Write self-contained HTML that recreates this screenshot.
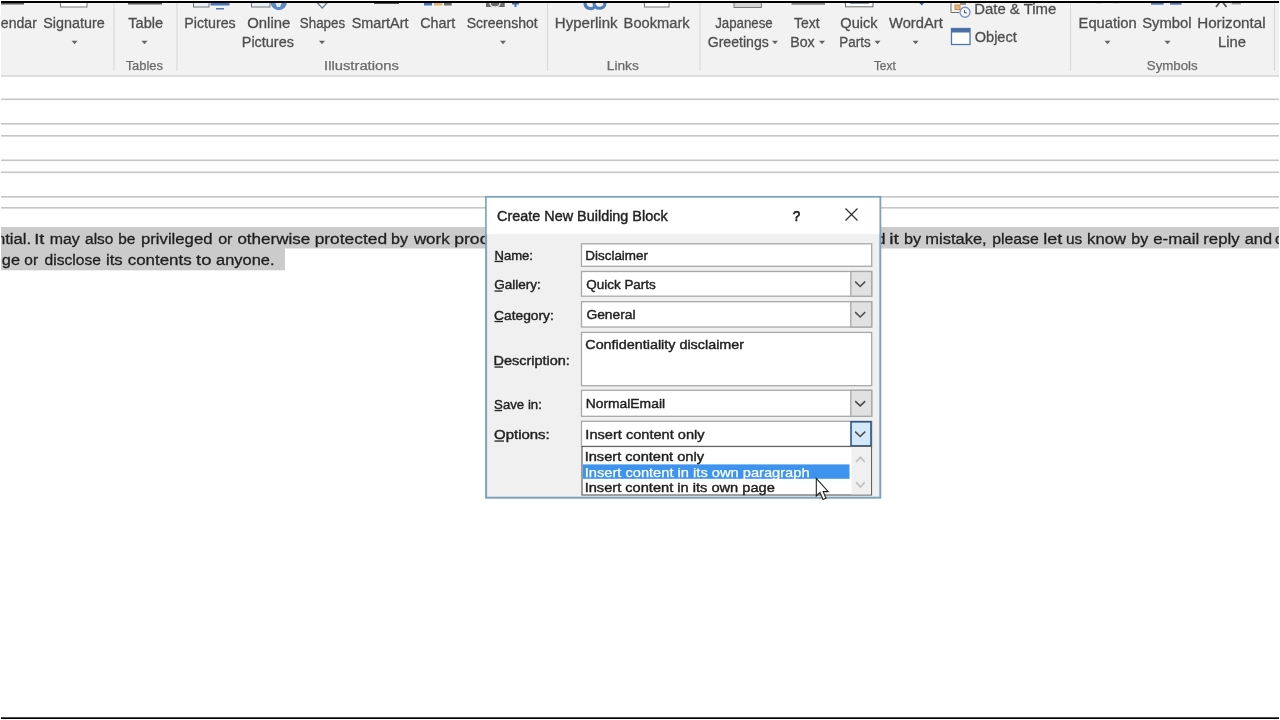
<!DOCTYPE html>
<html><head><meta charset="utf-8"><style>
html,body{margin:0;padding:0;width:1280px;height:720px;overflow:hidden;background:#fff;}
svg{display:block;filter:blur(0.4px);font-family:"Liberation Sans",sans-serif;}
</style></head><body>
<svg width="1280" height="720" viewBox="0 0 1280 720">
<rect x="1" y="3" width="1278" height="72" fill="#f2f2f2" />
<rect x="1" y="75" width="1278" height="2" fill="#dedede" />
<rect x="113.5" y="3" width="1" height="68" fill="#d6d6d6" />
<rect x="176.5" y="3" width="1" height="68" fill="#d6d6d6" />
<rect x="547" y="3" width="1" height="68" fill="#d6d6d6" />
<rect x="699.5" y="3" width="1" height="68" fill="#d6d6d6" />
<rect x="1070" y="3" width="1" height="68" fill="#d6d6d6" />
<rect x="1274" y="3" width="1" height="68" fill="#d6d6d6" />
<text x="0.84" y="27.8" font-size="14" fill="#4e4e4e" textLength="36.01" lengthAdjust="spacingAndGlyphs" stroke="#4e4e4e" stroke-width="0.28">endar</text>
<text x="43.25" y="27.8" font-size="14" fill="#4e4e4e" textLength="61.40" lengthAdjust="spacingAndGlyphs" stroke="#4e4e4e" stroke-width="0.28">Signature</text>
<text x="128.31" y="27.8" font-size="14" fill="#4e4e4e" textLength="34.76" lengthAdjust="spacingAndGlyphs" stroke="#4e4e4e" stroke-width="0.28">Table</text>
<text x="184.26" y="27.8" font-size="14" fill="#4e4e4e" textLength="51.47" lengthAdjust="spacingAndGlyphs" stroke="#4e4e4e" stroke-width="0.28">Pictures</text>
<text x="247.23" y="27.8" font-size="14" fill="#4e4e4e" textLength="43.05" lengthAdjust="spacingAndGlyphs" stroke="#4e4e4e" stroke-width="0.28">Online</text>
<text x="299.80" y="27.8" font-size="14" fill="#4e4e4e" textLength="45.29" lengthAdjust="spacingAndGlyphs" stroke="#4e4e4e" stroke-width="0.28">Shapes</text>
<text x="351.75" y="27.8" font-size="14" fill="#4e4e4e" textLength="56.74" lengthAdjust="spacingAndGlyphs" stroke="#4e4e4e" stroke-width="0.28">SmartArt</text>
<text x="420.28" y="27.8" font-size="14" fill="#4e4e4e" textLength="34.99" lengthAdjust="spacingAndGlyphs" stroke="#4e4e4e" stroke-width="0.28">Chart</text>
<text x="466.67" y="27.8" font-size="14" fill="#4e4e4e" textLength="71.05" lengthAdjust="spacingAndGlyphs" stroke="#4e4e4e" stroke-width="0.28">Screenshot</text>
<text x="554.80" y="27.8" font-size="14" fill="#4e4e4e" textLength="62.78" lengthAdjust="spacingAndGlyphs" stroke="#4e4e4e" stroke-width="0.28">Hyperlink</text>
<text x="623.63" y="27.8" font-size="14" fill="#4e4e4e" textLength="66.00" lengthAdjust="spacingAndGlyphs" stroke="#4e4e4e" stroke-width="0.28">Bookmark</text>
<text x="715.20" y="27.8" font-size="14" fill="#4e4e4e" textLength="57.52" lengthAdjust="spacingAndGlyphs" stroke="#4e4e4e" stroke-width="0.28">Japanese</text>
<text x="794.12" y="27.8" font-size="14" fill="#4e4e4e" textLength="25.60" lengthAdjust="spacingAndGlyphs" stroke="#4e4e4e" stroke-width="0.28">Text</text>
<text x="840.34" y="27.8" font-size="14" fill="#4e4e4e" textLength="37.27" lengthAdjust="spacingAndGlyphs" stroke="#4e4e4e" stroke-width="0.28">Quick</text>
<text x="889.08" y="27.8" font-size="14" fill="#4e4e4e" textLength="53.66" lengthAdjust="spacingAndGlyphs" stroke="#4e4e4e" stroke-width="0.28">WordArt</text>
<text x="1078.63" y="27.8" font-size="14" fill="#4e4e4e" textLength="57.97" lengthAdjust="spacingAndGlyphs" stroke="#4e4e4e" stroke-width="0.28">Equation</text>
<text x="1142.23" y="27.8" font-size="14" fill="#4e4e4e" textLength="49.40" lengthAdjust="spacingAndGlyphs" stroke="#4e4e4e" stroke-width="0.28">Symbol</text>
<text x="1197.18" y="27.8" font-size="14" fill="#4e4e4e" textLength="68.44" lengthAdjust="spacingAndGlyphs" stroke="#4e4e4e" stroke-width="0.28">Horizontal</text>
<text x="241.75" y="47.2" font-size="14" fill="#4e4e4e" textLength="52.14" lengthAdjust="spacingAndGlyphs" stroke="#4e4e4e" stroke-width="0.28">Pictures</text>
<text x="707.69" y="47.2" font-size="14" fill="#4e4e4e" textLength="61.16" lengthAdjust="spacingAndGlyphs" stroke="#4e4e4e" stroke-width="0.28">Greetings</text>
<text x="790.26" y="47.2" font-size="14" fill="#4e4e4e" textLength="24.45" lengthAdjust="spacingAndGlyphs" stroke="#4e4e4e" stroke-width="0.28">Box</text>
<text x="839.33" y="47.2" font-size="14" fill="#4e4e4e" textLength="31.33" lengthAdjust="spacingAndGlyphs" stroke="#4e4e4e" stroke-width="0.28">Parts</text>
<text x="1217.97" y="47.2" font-size="14" fill="#4e4e4e" textLength="27.91" lengthAdjust="spacingAndGlyphs" stroke="#4e4e4e" stroke-width="0.28">Line</text>
<path d="M71.6,40.65 L77.6,40.65 L74.6,44.15 Z" fill="#666" stroke="none" stroke-width="1" />
<path d="M141.5,40.65 L147.5,40.65 L144.5,44.15 Z" fill="#666" stroke="none" stroke-width="1" />
<path d="M319.0,40.65 L325.0,40.65 L322,44.15 Z" fill="#666" stroke="none" stroke-width="1" />
<path d="M500.0,40.65 L506.0,40.65 L503,44.15 Z" fill="#666" stroke="none" stroke-width="1" />
<path d="M912.6,40.65 L918.6,40.65 L915.6,44.15 Z" fill="#666" stroke="none" stroke-width="1" />
<path d="M1104.5,40.65 L1110.5,40.65 L1107.5,44.15 Z" fill="#666" stroke="none" stroke-width="1" />
<path d="M1164.5,40.65 L1170.5,40.65 L1167.5,44.15 Z" fill="#666" stroke="none" stroke-width="1" />
<path d="M772.0,40.65 L778.0,40.65 L775,44.15 Z" fill="#666" stroke="none" stroke-width="1" />
<path d="M819.0,40.65 L825.0,40.65 L822,44.15 Z" fill="#666" stroke="none" stroke-width="1" />
<path d="M874.5,40.65 L880.5,40.65 L877.5,44.15 Z" fill="#666" stroke="none" stroke-width="1" />
<text x="974.21" y="14.1" font-size="14" fill="#4e4e4e" textLength="82.10" lengthAdjust="spacingAndGlyphs" stroke="#4e4e4e" stroke-width="0.28">Date &amp; Time</text>
<text x="974.75" y="42.3" font-size="14.5" fill="#4e4e4e" textLength="42.00" lengthAdjust="spacingAndGlyphs" stroke="#4e4e4e" stroke-width="0.28">Object</text>
<text x="125.64" y="70.4" font-size="13" fill="#6a6a6a" textLength="37.42" lengthAdjust="spacingAndGlyphs" stroke="#6a6a6a" stroke-width="0.25">Tables</text>
<text x="324.07" y="70.4" font-size="13" fill="#6a6a6a" textLength="74.76" lengthAdjust="spacingAndGlyphs" stroke="#6a6a6a" stroke-width="0.25">Illustrations</text>
<text x="606.80" y="70.4" font-size="13" fill="#6a6a6a" textLength="32.02" lengthAdjust="spacingAndGlyphs" stroke="#6a6a6a" stroke-width="0.25">Links</text>
<text x="873.91" y="70.4" font-size="13" fill="#6a6a6a" textLength="21.79" lengthAdjust="spacingAndGlyphs" stroke="#6a6a6a" stroke-width="0.25">Text</text>
<text x="1146.80" y="70.4" font-size="13" fill="#6a6a6a" textLength="50.86" lengthAdjust="spacingAndGlyphs" stroke="#6a6a6a" stroke-width="0.25">Symbols</text>
<rect x="1" y="2.5" width="23" height="2" fill="#5a5a5a" />
<rect x="60.5" y="2" width="26.5" height="5" fill="#fff" stroke="#7a7a7a" stroke-width="1"/>
<rect x="128" y="2.5" width="34" height="2" fill="#5a5a5a" />
<rect x="193.5" y="2" width="15.5" height="5" fill="#e8eef6" stroke="#777" stroke-width="1"/>
<rect x="210.5" y="2" width="19" height="3.5" fill="#4a7ab8" />
<rect x="216" y="8" width="8" height="1.5" fill="#4a7ab8" />
<rect x="251.5" y="2" width="18.5" height="5" fill="#e8eef6" stroke="#777" stroke-width="1"/>
<path d="M270.5,2 A8.2,8.2 0 0 0 287,2 Z" fill="#5b8ac4" stroke="none" stroke-width="1" />
<path d="M275,2 L282,2 L280,7 L277,7 Z" fill="#dfeaf6" stroke="none" stroke-width="1" />
<path d="M317,2.5 L327.5,2.5 L322.2,8 Z" fill="#f4f6fa" stroke="#6d7d90" stroke-width="1.3" />
<rect x="374" y="2" width="25" height="1.8" fill="#333" />
<rect x="424" y="2.5" width="8" height="3" fill="#4275b5" />
<rect x="434" y="2.5" width="8.3" height="3" fill="#e4b46a" />
<rect x="444" y="2.5" width="7.7" height="3" fill="#6f6f6f" />
<rect x="486" y="2.5" width="18.7" height="4.5" fill="#6b6b6b" />
<path d="M490,3 A5,4 0 0 0 500,3" fill="none" stroke="#e6e6e6" stroke-width="1.5" />
<rect x="514.5" y="2" width="2" height="5" fill="#3d6fb0" />
<rect x="512" y="3" width="7" height="1.5" fill="#3d6fb0" />
<path d="M585,3 C585,10 595,10 595,5 M594,3 C594,10 605,10 605,3" fill="none" stroke="#4f7fba" stroke-width="3.2" />
<rect x="644.5" y="2" width="24.5" height="5" fill="#fff" stroke="#777" stroke-width="1"/>
<rect x="734" y="2" width="27.4" height="5.5" fill="#d4d4d4" stroke="#7a7a7a" stroke-width="1"/>
<rect x="791.4" y="3" width="33.6" height="1.8" fill="#8a8a8a" />
<rect x="845.5" y="2" width="27.5" height="4.8" fill="#fff" stroke="#6b6b6b" stroke-width="1"/>
<rect x="850" y="2" width="19" height="1.5" fill="#1f3d66" />
<path d="M918,2 L924.5,2 L922,5.5 Z" fill="#3a6ab0" stroke="none" stroke-width="1" />
<path d="M951,3 L951,12.5 L959,12.5" fill="none" stroke="#6f6f6f" stroke-width="1" />
<rect x="955" y="5" width="5" height="4.5" fill="#e8b27a" stroke="#d0894a" stroke-width="1"/>
<rect x="960" y="3" width="6" height="2" fill="#9a9a9a" />
<circle cx="965" cy="12.3" r="5" fill="#f4f7fb" stroke="#7b96bb" stroke-width="1.4"/>
<path d="M964.5,10 L964.5,12.8 L967,12.8" fill="none" stroke="#555" stroke-width="1" />
<rect x="951.5" y="28.5" width="18.5" height="16" fill="#fff" stroke="#5275a8" stroke-width="1.3"/>
<rect x="951.5" y="28.5" width="18.5" height="4" fill="#4a6fa6" />
<rect x="1095.6" y="1.5" width="6.5" height="1.6" fill="#444" />
<rect x="1113" y="1.5" width="6" height="1.6" fill="#444" />
<rect x="1151" y="2.3" width="12.6" height="2.4" fill="#4a7ab8" />
<rect x="1170" y="2.3" width="11.5" height="2.4" fill="#4a7ab8" />
<path d="M1216,7 L1219.5,2.5 M1226.5,7 L1223,2.5" fill="none" stroke="#555" stroke-width="1.8" />
<rect x="1231.6" y="3" width="9.4" height="1.5" fill="#a0a0a0" />
<rect x="1" y="1" width="1278" height="2" fill="#000" />
<rect x="1" y="98.5" width="1278" height="1.6" fill="#c6c6c6" />
<rect x="1" y="123.0" width="1278" height="1.6" fill="#c6c6c6" />
<rect x="1" y="135.0" width="1278" height="1.6" fill="#c6c6c6" />
<rect x="1" y="159.5" width="1278" height="1.6" fill="#c6c6c6" />
<rect x="1" y="171.5" width="1278" height="1.6" fill="#c6c6c6" />
<rect x="1" y="196.0" width="1278" height="1.6" fill="#c6c6c6" />
<rect x="1" y="207.0" width="1278" height="1.6" fill="#c6c6c6" />
<rect x="1" y="227" width="1278" height="21.5" fill="#cbcbcb" />
<rect x="1" y="248" width="284" height="22.3" fill="#cbcbcb" />
<text x="34.26" y="243.6" font-size="15.5" fill="#1f1f1f" textLength="10.15" lengthAdjust="spacingAndGlyphs" stroke="#1f1f1f" stroke-width="0.3">It</text>
<text x="49.66" y="243.6" font-size="15.5" fill="#1f1f1f" textLength="30.12" lengthAdjust="spacingAndGlyphs" stroke="#1f1f1f" stroke-width="0.3">may</text>
<text x="85.08" y="243.6" font-size="15.5" fill="#1f1f1f" textLength="28.33" lengthAdjust="spacingAndGlyphs" stroke="#1f1f1f" stroke-width="0.3">also</text>
<text x="118.20" y="243.6" font-size="15.5" fill="#1f1f1f" textLength="17.13" lengthAdjust="spacingAndGlyphs" stroke="#1f1f1f" stroke-width="0.3">be</text>
<text x="141.01" y="243.6" font-size="15.5" fill="#1f1f1f" textLength="71.48" lengthAdjust="spacingAndGlyphs" stroke="#1f1f1f" stroke-width="0.3">privileged</text>
<text x="218.15" y="243.6" font-size="15.5" fill="#1f1f1f" textLength="14.36" lengthAdjust="spacingAndGlyphs" stroke="#1f1f1f" stroke-width="0.3">or</text>
<text x="237.42" y="243.6" font-size="15.5" fill="#1f1f1f" textLength="72.74" lengthAdjust="spacingAndGlyphs" stroke="#1f1f1f" stroke-width="0.3">otherwise</text>
<text x="314.67" y="243.6" font-size="15.5" fill="#1f1f1f" textLength="72.45" lengthAdjust="spacingAndGlyphs" stroke="#1f1f1f" stroke-width="0.3">protected</text>
<text x="391.06" y="243.6" font-size="15.5" fill="#1f1f1f" textLength="16.96" lengthAdjust="spacingAndGlyphs" stroke="#1f1f1f" stroke-width="0.3">by</text>
<text x="413.90" y="243.6" font-size="15.5" fill="#1f1f1f" textLength="35.72" lengthAdjust="spacingAndGlyphs" stroke="#1f1f1f" stroke-width="0.3">work</text>
<text x="454.15" y="243.6" font-size="15.5" fill="#1f1f1f" textLength="58.94" lengthAdjust="spacingAndGlyphs" stroke="#1f1f1f" stroke-width="0.3">product</text>
<text x="-4.11" y="243.6" font-size="15.5" fill="#1f1f1f" textLength="35.36" lengthAdjust="spacingAndGlyphs" stroke="#1f1f1f" stroke-width="0.3">ntial.</text>
<text x="822.41" y="243.6" font-size="15.5" fill="#1f1f1f" textLength="63.28" lengthAdjust="spacingAndGlyphs" stroke="#1f1f1f" stroke-width="0.3">received</text>
<text x="889.15" y="243.6" font-size="15.5" fill="#1f1f1f" textLength="9.65" lengthAdjust="spacingAndGlyphs" stroke="#1f1f1f" stroke-width="0.3">it</text>
<text x="903.94" y="243.6" font-size="15.5" fill="#1f1f1f" textLength="17.18" lengthAdjust="spacingAndGlyphs" stroke="#1f1f1f" stroke-width="0.3">by</text>
<text x="925.33" y="243.6" font-size="15.5" fill="#1f1f1f" textLength="61.32" lengthAdjust="spacingAndGlyphs" stroke="#1f1f1f" stroke-width="0.3">mistake,</text>
<text x="992.17" y="243.6" font-size="15.5" fill="#1f1f1f" textLength="46.67" lengthAdjust="spacingAndGlyphs" stroke="#1f1f1f" stroke-width="0.3">please</text>
<text x="1043.23" y="243.6" font-size="15.5" fill="#1f1f1f" textLength="18.98" lengthAdjust="spacingAndGlyphs" stroke="#1f1f1f" stroke-width="0.3">let</text>
<text x="1065.90" y="243.6" font-size="15.5" fill="#1f1f1f" textLength="16.26" lengthAdjust="spacingAndGlyphs" stroke="#1f1f1f" stroke-width="0.3">us</text>
<text x="1087.12" y="243.6" font-size="15.5" fill="#1f1f1f" textLength="38.77" lengthAdjust="spacingAndGlyphs" stroke="#1f1f1f" stroke-width="0.3">know</text>
<text x="1131.36" y="243.6" font-size="15.5" fill="#1f1f1f" textLength="16.96" lengthAdjust="spacingAndGlyphs" stroke="#1f1f1f" stroke-width="0.3">by</text>
<text x="1153.23" y="243.6" font-size="15.5" fill="#1f1f1f" textLength="45.92" lengthAdjust="spacingAndGlyphs" stroke="#1f1f1f" stroke-width="0.3">e-mail</text>
<text x="1203.31" y="243.6" font-size="15.5" fill="#1f1f1f" textLength="36.25" lengthAdjust="spacingAndGlyphs" stroke="#1f1f1f" stroke-width="0.3">reply</text>
<text x="1244.75" y="243.6" font-size="15.5" fill="#1f1f1f" textLength="27.27" lengthAdjust="spacingAndGlyphs" stroke="#1f1f1f" stroke-width="0.3">and</text>
<text x="1275.13" y="243.6" font-size="15.5" fill="#1f1f1f" textLength="45.61" lengthAdjust="spacingAndGlyphs" stroke="#1f1f1f" stroke-width="0.3">delete</text>
<text x="24.38" y="265.3" font-size="15.5" fill="#1f1f1f" textLength="13.82" lengthAdjust="spacingAndGlyphs" stroke="#1f1f1f" stroke-width="0.3">or</text>
<text x="44.58" y="265.3" font-size="15.5" fill="#1f1f1f" textLength="56.37" lengthAdjust="spacingAndGlyphs" stroke="#1f1f1f" stroke-width="0.3">disclose</text>
<text x="106.02" y="265.3" font-size="15.5" fill="#1f1f1f" textLength="16.67" lengthAdjust="spacingAndGlyphs" stroke="#1f1f1f" stroke-width="0.3">its</text>
<text x="127.72" y="265.3" font-size="15.5" fill="#1f1f1f" textLength="63.97" lengthAdjust="spacingAndGlyphs" stroke="#1f1f1f" stroke-width="0.3">contents</text>
<text x="196.12" y="265.3" font-size="15.5" fill="#1f1f1f" textLength="15.45" lengthAdjust="spacingAndGlyphs" stroke="#1f1f1f" stroke-width="0.3">to</text>
<text x="216.04" y="265.3" font-size="15.5" fill="#1f1f1f" textLength="58.50" lengthAdjust="spacingAndGlyphs" stroke="#1f1f1f" stroke-width="0.3">anyone.</text>
<text x="-19.86" y="265.3" font-size="15.5" fill="#1f1f1f" textLength="39.82" lengthAdjust="spacingAndGlyphs" stroke="#1f1f1f" stroke-width="0.3">ledge</text>
<rect x="486.1" y="196.9" width="394.2" height="300.8" fill="#f0f0f0" stroke="#7ea3bc" stroke-width="2"/>
<rect x="486.75" y="197.75" width="392.5" height="36" fill="#ffffff" />
<text x="497.08" y="220.5" font-size="14" fill="#222" textLength="170.51" lengthAdjust="spacingAndGlyphs" stroke="#222" stroke-width="0.4">Create New Building Block</text>
<text x="792.88" y="220.5" font-size="14.5" fill="#222" textLength="7.18" lengthAdjust="spacingAndGlyphs" stroke="#222" stroke-width="0.7">?</text>
<path d="M845.5,208.5 L857.5,220.5 M857.5,208.5 L845.5,220.5" fill="none" stroke="#333" stroke-width="1.3" />
<rect x="581.5" y="243.8" width="290.20000000000005" height="22.5" fill="#fff" stroke="#a8a8a8" stroke-width="1.3"/>
<rect x="581.5" y="271.5" width="290.20000000000005" height="24.69999999999999" fill="#fff" stroke="#a8a8a8" stroke-width="1.3"/>
<rect x="850.8" y="271.5" width="20.90000000000009" height="24.69999999999999" fill="#e1e1e1" stroke="#a8a8a8" stroke-width="1.3"/>
<path d="M855.2,281.65000000000003 L860.2,286.45000000000005 L865.2,281.65000000000003" fill="none" stroke="#4a4a4a" stroke-width="1.5" />
<rect x="581.5" y="301.7" width="290.20000000000005" height="25.30000000000001" fill="#fff" stroke="#a8a8a8" stroke-width="1.3"/>
<rect x="850.8" y="301.7" width="20.90000000000009" height="25.30000000000001" fill="#e1e1e1" stroke="#a8a8a8" stroke-width="1.3"/>
<path d="M855.2,312.15000000000003 L860.2,316.95000000000005 L865.2,312.15000000000003" fill="none" stroke="#4a4a4a" stroke-width="1.5" />
<rect x="581.5" y="332.4" width="290.2" height="53.3" fill="#fff" stroke="#a8a8a8" stroke-width="1.3"/>
<rect x="581.5" y="390.3" width="290.20000000000005" height="26.0" fill="#fff" stroke="#a8a8a8" stroke-width="1.3"/>
<rect x="850.8" y="390.3" width="20.90000000000009" height="26.0" fill="#e1e1e1" stroke="#a8a8a8" stroke-width="1.3"/>
<path d="M855.2,401.1 L860.2,405.90000000000003 L865.2,401.1" fill="none" stroke="#4a4a4a" stroke-width="1.5" />
<rect x="581.5" y="421.3" width="290.20000000000005" height="25.099999999999966" fill="#fff" stroke="#a8a8a8" stroke-width="1.3"/>
<rect x="851" y="421.8" width="20" height="24.099999999999966" fill="#d3e8fa" stroke="#2c5784" stroke-width="1.6"/>
<path d="M855.2,431.65000000000003 L860.2,436.45000000000005 L865.2,431.65000000000003" fill="none" stroke="#4a4a4a" stroke-width="1.5" />
<text x="494.45" y="259.6" font-size="13" fill="#222" textLength="38.53" lengthAdjust="spacingAndGlyphs" stroke="#222" stroke-width="0.4">Name:</text>
<text x="494.22" y="289" font-size="13" fill="#222" textLength="46.60" lengthAdjust="spacingAndGlyphs" stroke="#222" stroke-width="0.4">Gallery:</text>
<text x="494.01" y="319.9" font-size="13" fill="#222" textLength="59.84" lengthAdjust="spacingAndGlyphs" stroke="#222" stroke-width="0.4">Category:</text>
<text x="493.54" y="365" font-size="13" fill="#222" textLength="76.33" lengthAdjust="spacingAndGlyphs" stroke="#222" stroke-width="0.4">Description:</text>
<text x="494.11" y="408.5" font-size="13" fill="#222" textLength="47.73" lengthAdjust="spacingAndGlyphs" stroke="#222" stroke-width="0.4">Save in:</text>
<text x="494.03" y="439" font-size="13" fill="#222" textLength="55.73" lengthAdjust="spacingAndGlyphs" stroke="#222" stroke-width="0.4">Options:</text>
<rect x="494.5" y="260.79999999999995" width="8.5" height="1.3" fill="#222" />
<rect x="494.5" y="290.4" width="8.0" height="1.3" fill="#222" />
<rect x="494.5" y="320.9" width="8.5" height="1.3" fill="#222" />
<rect x="494.5" y="366.4" width="8.5" height="1.3" fill="#222" />
<rect x="494.5" y="409.9" width="7.5" height="1.3" fill="#222" />
<rect x="494.5" y="440.4" width="9.5" height="1.3" fill="#222" />
<text x="585.22" y="259.6" font-size="13" fill="#222" textLength="62.81" lengthAdjust="spacingAndGlyphs" stroke="#222" stroke-width="0.4">Disclaimer</text>
<text x="586.19" y="288.9" font-size="13" fill="#222" textLength="69.65" lengthAdjust="spacingAndGlyphs" stroke="#222" stroke-width="0.4">Quick Parts</text>
<text x="586.41" y="319" font-size="13" fill="#222" textLength="49.13" lengthAdjust="spacingAndGlyphs" stroke="#222" stroke-width="0.4">General</text>
<text x="585.28" y="348.75" font-size="13" fill="#222" textLength="158.81" lengthAdjust="spacingAndGlyphs" stroke="#222" stroke-width="0.4">Confidentiality disclaimer</text>
<text x="585.69" y="408" font-size="13" fill="#222" textLength="79.36" lengthAdjust="spacingAndGlyphs" stroke="#222" stroke-width="0.4">NormalEmail</text>
<text x="585.34" y="438.75" font-size="13" fill="#222" textLength="119.29" lengthAdjust="spacingAndGlyphs" stroke="#222" stroke-width="0.4">Insert content only</text>
<rect x="582" y="446.5" width="289.5" height="48.5" fill="#fff" stroke="#646464" stroke-width="1.2"/>
<rect x="851.5" y="447.2" width="19.5" height="47.2" fill="#f0f0f0" />
<rect x="583" y="464.4" width="266.5" height="14.4" fill="#3d93ee" />
<path d="M856,462 L860.4,457.3 L864.8,462" fill="none" stroke="#c2c2c2" stroke-width="1.8" />
<path d="M856,482.2 L860.4,487 L864.8,482.2" fill="none" stroke="#c2c2c2" stroke-width="1.8" />
<text x="584.69" y="460.6" font-size="13" fill="#1a1a1a" textLength="119.34" lengthAdjust="spacingAndGlyphs" stroke="#222" stroke-width="0.4">Insert content only</text>
<text x="584.68" y="476.9" font-size="13" fill="#ffffff" textLength="224.91" lengthAdjust="spacingAndGlyphs" stroke="#fff" stroke-width="0.25">Insert content in its own paragraph</text>
<text x="584.68" y="491.9" font-size="13" fill="#1a1a1a" textLength="190.12" lengthAdjust="spacingAndGlyphs" stroke="#222" stroke-width="0.4">Insert content in its own page</text>
<path d="M816.3,478.5 L816.3,496 L820,492.5 L823,499.5 L826,498.2 L823.2,491.6 L828.2,491.6 Z" fill="#fff" stroke="#222" stroke-width="1.1" />
<rect x="0" y="0" width="1" height="720" fill="#fff" />
<rect x="1279" y="0" width="1" height="720" fill="#fff" />
<rect x="1" y="717.3" width="1278" height="1.7" fill="#000" />
</svg>
</body></html>
